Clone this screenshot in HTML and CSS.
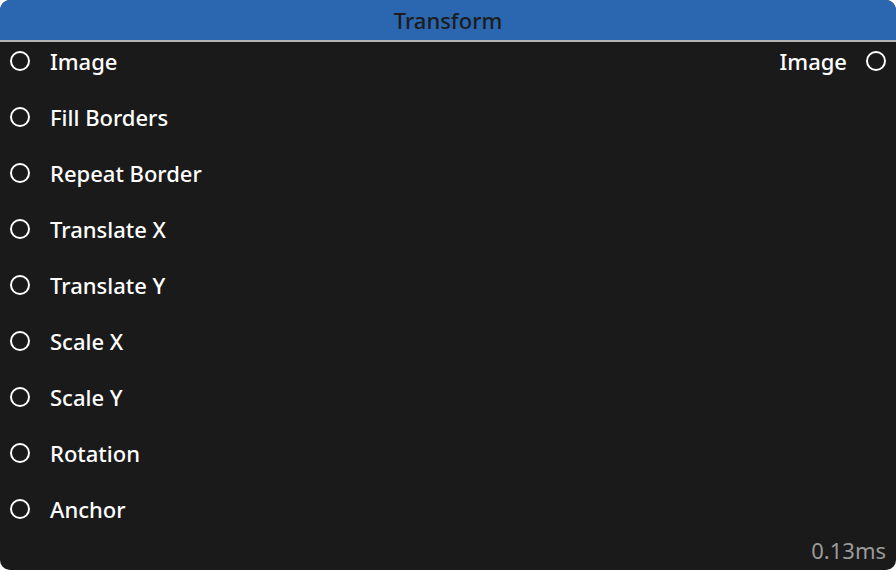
FILE: index.html
```html
<!DOCTYPE html>
<html lang="en">

<head>
    <meta charset="UTF-8">
    <title>Transform</title>
    <link rel="stylesheet" href="styles.css">
</head>

<body>
    <div class="node">
        <div class="node__header">Transform</div>
        <div class="node__body">
            <ul class="inputs">
                <li class="port"><span class="port__dot"></span>Image</li>
                <li class="port"><span class="port__dot"></span>Fill Borders</li>
                <li class="port"><span class="port__dot"></span>Repeat Border</li>
                <li class="port"><span class="port__dot"></span>Translate X</li>
                <li class="port"><span class="port__dot"></span>Translate Y</li>
                <li class="port"><span class="port__dot"></span>Scale X</li>
                <li class="port"><span class="port__dot"></span>Scale Y</li>
                <li class="port"><span class="port__dot"></span>Rotation</li>
                <li class="port"><span class="port__dot"></span>Anchor</li>
            </ul>
            <ul class="outputs">
                <li class="port port--out">Image<span class="port__dot"></span></li>
            </ul>
        </div>
        <div class="node__footer">0.13ms</div>
    </div>
</body>

</html>
```

FILE: styles.css
```css
*,
::after,
::before {
    box-sizing: border-box;
}

body {
    margin: 0;
    background: #fff;
    font-family: "Noto Sans", sans-serif;
}

ul {
    margin: 0;
    padding: 0;
    list-style: none;
}

.node {
    width: 896px;
    height: 570px;
    display: flex;
    flex-direction: column;
    background: #1a1a1a;
    border-radius: 10px;
    overflow: hidden;
}

.node__header {
    height: 42px;
    flex-shrink: 0;
    display: flex;
    align-items: center;
    justify-content: center;
    background: #2a67b0;
    border-bottom: 2px solid #b4b4b4;
    color: #1c1c1c;
    font-size: 22px;
    font-weight: 500;
}

.node__body {
    flex: 1;
    display: flex;
    justify-content: space-between;
    padding: 0 10px;
}

.inputs,
.outputs {
    display: flex;
    flex-direction: column;
    gap: 18px;
}

.port {
    height: 38px;
    display: flex;
    align-items: center;
    gap: 20px;
    color: #fff;
    font-size: 22px;
    font-weight: 500;
}

.port--out {
    gap: 19px;
}

.port__dot {
    width: 20px;
    height: 20px;
    border: 2px solid #fff;
    border-radius: 50%;
}

.node__footer {
    align-self: flex-end;
    padding: 0 10px 5px 0;
    color: #9a9a9a;
    font-size: 22px;
}
```
